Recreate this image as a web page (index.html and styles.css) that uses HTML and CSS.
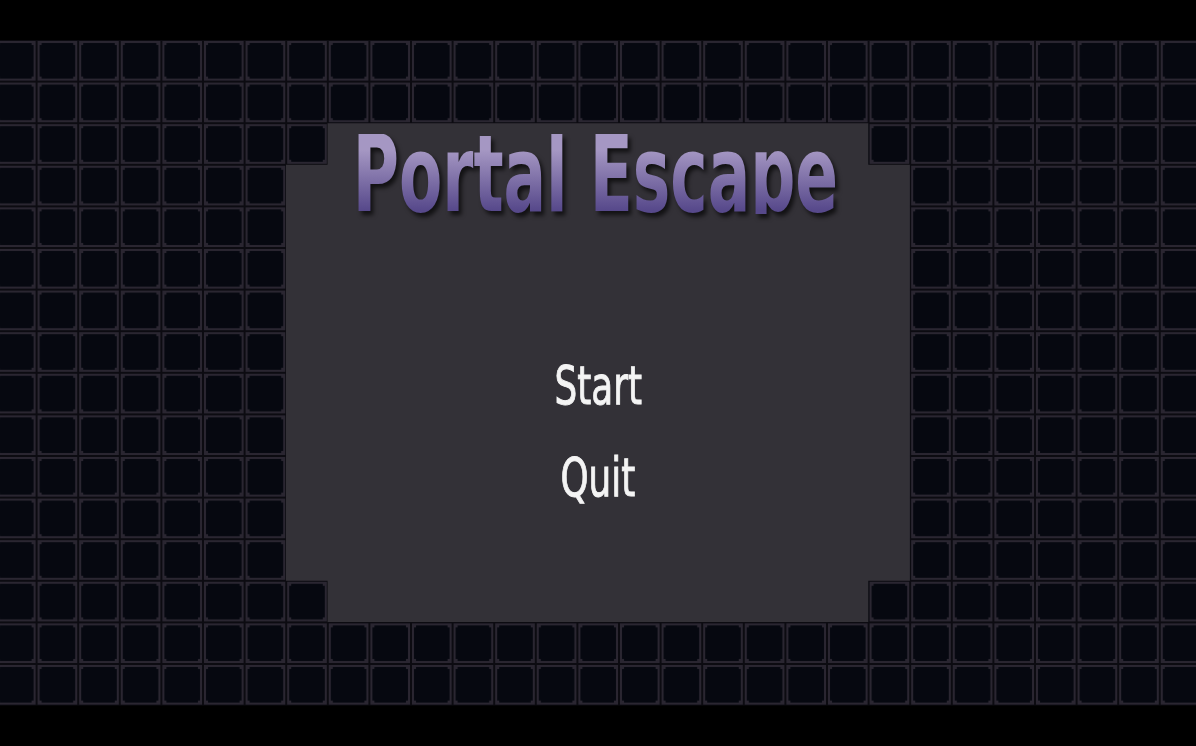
FILE: index.html
```html
<!DOCTYPE html>
<html lang="en">
<head>
    <meta charset="UTF-8">
    <meta name="viewport" content="width=device-width, initial-scale=1.0">
    <title>Portal Escape</title>
    <link rel="stylesheet" href="styles.css">
</head>
<body>

    <div class="screen">
        <div class="board">
            <!-- floor tiles, one pattern cell per grid cell -->
            <svg class="tiles" xmlns="http://www.w3.org/2000/svg">
                <defs>
                    <pattern id="tile" width="41.6" height="41.6" patternUnits="userSpaceOnUse">
                        <rect x="0" y="0" width="41.6" height="41.6" fill="#0c0b11"/>
                        <rect x="1" y="1" width="39.6" height="39.6" fill="#2a2631"/>
                        <rect x="3" y="3" width="35.6" height="35.6" fill="#060810"/>
                        <rect x="3" y="3" width="2" height="2" fill="#2a2631"/>
                        <rect x="36.6" y="3" width="2" height="2" fill="#2a2631"/>
                        <rect x="3" y="36.6" width="2" height="2" fill="#2a2631"/>
                        <rect x="36.6" y="36.6" width="2" height="2" fill="#2a2631"/>
                    </pattern>
                </defs>
                <rect width="100%" height="100%" fill="url(#tile)"/>
            </svg>

            <main class="menu-panel">
                <h1 class="title"><span>Portal Escape</span></h1>
                <nav class="menu">
                    <button class="menu-item"><span>Start</span></button>
                    <button class="menu-item"><span>Quit</span></button>
                </nav>
            </main>
        </div>
    </div>

</body>
</html>
```

FILE: styles.css
```css
html, body {
    margin: 0;
    background: #000;
}
body {
    font-family: "DejaVu Sans Condensed", "Liberation Sans", sans-serif;
}
.screen {
    width: 1196px;
    height: 746px;
    padding: 40px 0;
    box-sizing: border-box;
    overflow: hidden;
    background: #000;
}
.board {
    display: grid;
    grid-template-columns: repeat(29, 41.6px);
    grid-template-rows: repeat(16, 41.6px);
    margin-left: -5.2px;
}
.tiles {
    grid-column: 1 / -1;
    grid-row: 1 / -1;
    width: 100%;
    height: 100%;
    display: block;
}
/* panel covers 15x12 tiles, corner tiles left uncovered */
.menu-panel {
    grid-column: 8 / 23;
    grid-row: 3 / 15;
    z-index: 1;
    background: #333137;
    display: flex;
    flex-direction: column;
    align-items: center;
    clip-path: polygon(
        41.6px 0, calc(100% - 41.6px) 0, calc(100% - 41.6px) 41.6px,
        100% 41.6px, 100% calc(100% - 41.6px), calc(100% - 41.6px) calc(100% - 41.6px),
        calc(100% - 41.6px) 100%, 41.6px 100%, 41.6px calc(100% - 41.6px),
        0 calc(100% - 41.6px), 0 41.6px, 41.6px 41.6px
    );
}
.title {
    margin: 11px 0 0;
    font-size: 107px;
    line-height: 80px;
    font-weight: 700;
    filter: drop-shadow(3px 4px 2px rgba(0, 0, 0, 0.65));
}
.title span {
    display: inline-block;
    transform: translateX(-2px) scaleX(0.655);
    white-space: nowrap;
    background: linear-gradient(to bottom, #a597c3 20%, #57498b 95%);
    -webkit-background-clip: text;
    background-clip: text;
    color: transparent;
}
.menu {
    display: flex;
    flex-direction: column;
    align-items: center;
    margin-top: 126px;
}
.menu-item {
    border: none;
    background: none;
    padding: 0;
    cursor: pointer;
    font-family: inherit;
    font-size: 53px;
    line-height: 92px;
    color: #f4f4f4;
}
.menu-item span {
    display: inline-block;
    transform: scaleX(0.75);
    -webkit-text-stroke: 0.9px #f4f4f4;
}
```
